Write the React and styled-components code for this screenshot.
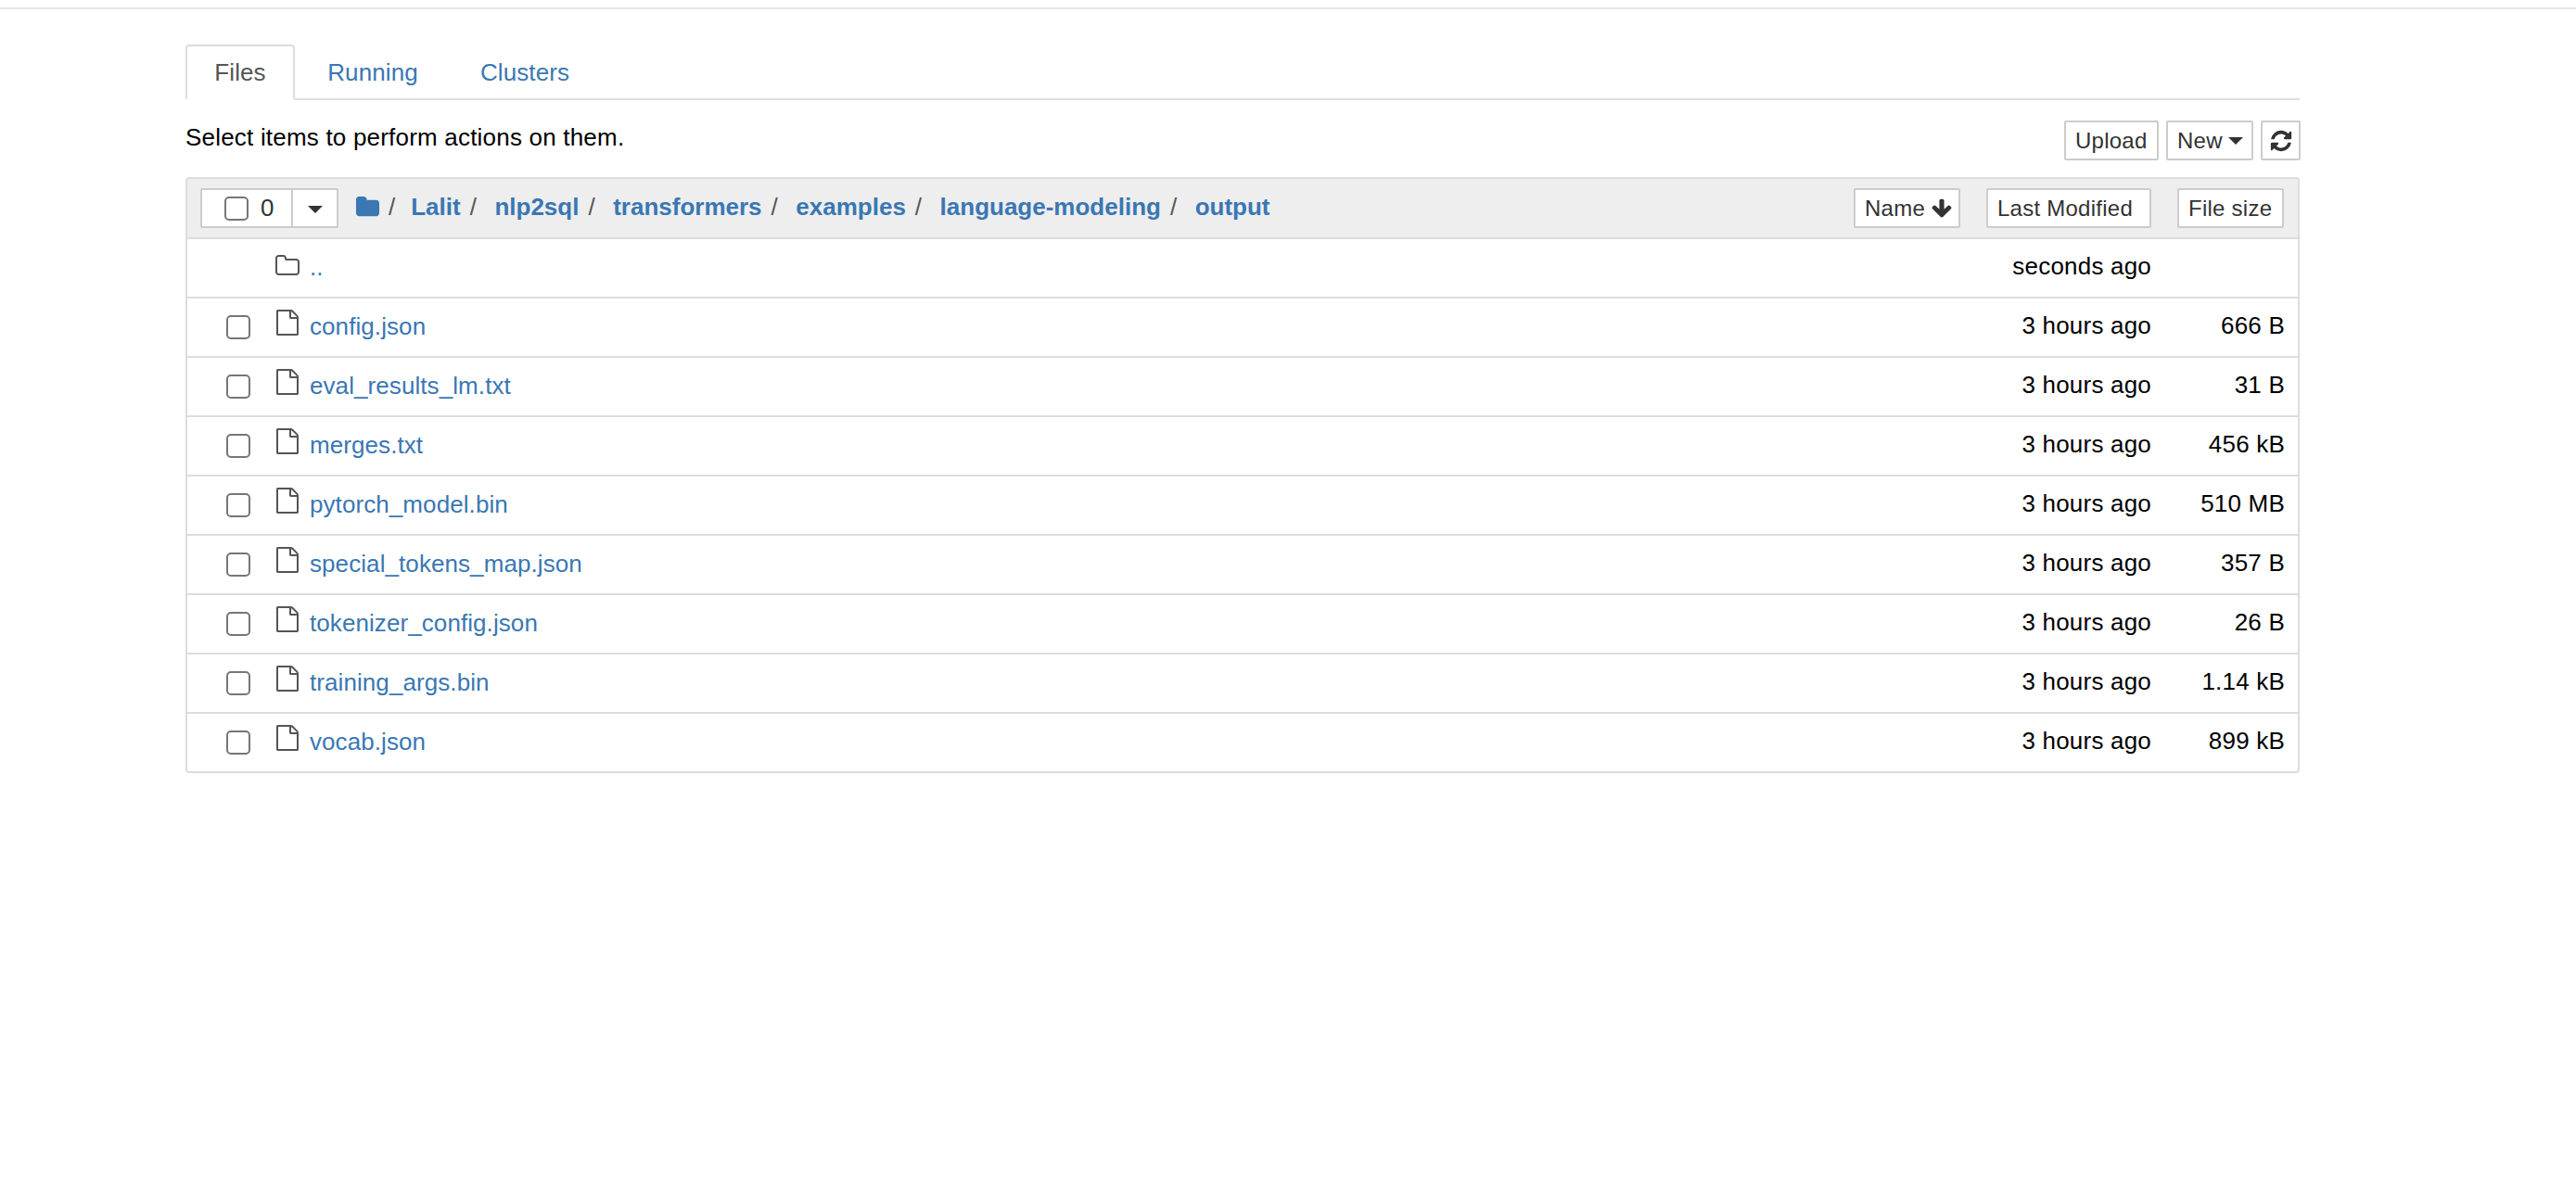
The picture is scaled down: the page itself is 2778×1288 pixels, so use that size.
import React from "react";
import styled, { createGlobalStyle } from "styled-components";

const Global = createGlobalStyle`
  html, body { margin: 0; padding: 0; background: #fff; }
  body { font-family: "Liberation Sans", Arial, sans-serif; font-size: 26px; color: #000; letter-spacing: 0.2px; }
  * { box-sizing: border-box; }
`;

const TopRule = styled.div`
  height: 10px;
  border-bottom: 2px solid #e7e7e7;
`;
const Page = styled.main`
  width: 2281px;
  margin: 38px 0 0 200px;
`;
const Tabs = styled.nav`
  display: flex;
  height: 60px;
  width: 2280px;
  border-bottom: 2px solid #ddd;
`;
const Tab = styled.a`
  display: flex;
  align-items: center;
  justify-content: center;
  height: 60px;
  width: ${p => p.$w}px;
  margin-right: ${p => p.$mr || 0}px;
  color: ${p => (p.$active ? "#555" : "#3a77b3")};
  background: ${p => (p.$active ? "#fff" : "transparent")};
  border: 2px solid ${p => (p.$active ? "#ddd" : "transparent")};
  border-bottom-color: ${p => (p.$active ? "#fff" : "transparent")};
  border-radius: 4px 4px 0 0;
  line-height: 36px;
  letter-spacing: 0.1px;
`;
const ActionRow = styled.div`
  display: flex;
  justify-content: space-between;
  align-items: flex-start;
  height: 83px;
`;
const Hint = styled.p`
  margin: 22px 0 0;
  line-height: 36px;
`;
const Actions = styled.div`
  display: flex;
  gap: 8px;
  margin-top: 22px;
`;
const Button = styled.button`
  display: inline-flex;
  align-items: center;
  justify-content: ${p => (p.$icon ? "center" : "flex-start")};
  gap: ${p => p.$gap || 0}px;
  width: ${p => p.$w}px;
  height: 43px;
  padding: 0 0 0 ${p => (p.$icon ? 0 : 10)}px;
  background: #fff;
  border: 2px solid #ccc;
  border-radius: 2px;
  color: #333;
  font: 24px/34px "Liberation Sans", Arial, sans-serif;
  letter-spacing: 0.25px;
`;
const Panel = styled.section`
  width: 2280px;
  border: 2px solid #ddd;
  border-radius: 4px;
`;
const Header = styled.header`
  display: flex;
  align-items: center;
  height: 65px;
  padding: 0 15px 0 14px;
  background: #eee;
  border-bottom: 2px solid #ddd;
`;
const SelectGroup = styled.div`
  display: flex;
  width: 149px;
  height: 43px;
  background: #fff;
  border: 2px solid #ccc;
  border-radius: 2px;
`;
const SelectCount = styled.div`
  display: flex;
  align-items: center;
  gap: 13px;
  width: 98px;
  padding-left: 24px;
  border-right: 2px solid #ccc;
  color: #333;
`;
const Caret = styled.span`
  display: inline-block;
  width: 0;
  height: 0;
  border-top: ${p => p.$size || 7}px solid #333;
  border-left: ${p => p.$size || 7}px solid transparent;
  border-right: ${p => p.$size || 7}px solid transparent;
`;
const CaretCell = styled.div`
  flex: 1;
  display: flex;
  align-items: center;
  justify-content: center;
  padding-top: 3px;
`;
const Check = styled.input.attrs({ type: "checkbox" })`
  appearance: none;
  display: block;
  flex: none;
  width: 26px;
  height: 26px;
  margin: 0;
  background: #fff;
  border: 2px solid #767676;
  border-radius: 5px;
`;
const Crumbs = styled.div`
  display: flex;
  align-items: center;
  margin-left: 18px;
  margin-top: -3px;
  color: #555;
  font-weight: 700;
  letter-spacing: 0;
`;
const Crumb = styled.a`
  color: #3a77b3;
`;
const Sep = styled.span`
  font-weight: 400;
  margin: 0 ${p => p.$r ?? 19.5}px 0 ${p => p.$l ?? 10}px;
`;
const Sorts = styled.div`
  display: flex;
  align-items: center;
  gap: 28px;
  margin-left: auto;
`;
const Row = styled.div`
  display: grid;
  grid-template-columns: 96px 1fr 1fr 144px;
  align-items: center;
  height: ${p => (p.$last ? 62 : 64)}px;
  padding: 0 14px;
  border-bottom: ${p => (p.$last ? "none" : "2px solid #ddd")};
`;
const Lead = styled.div`
  display: flex;
  align-items: center;
  padding-left: 28px;
`;
const NameCell = styled.div`
  display: flex;
  align-items: center;
  gap: 11px;
  margin-left: -16px;
`;
const Glyph = styled.svg`
  flex: none;
  display: block;
  width: ${p => p.$size}px;
  height: ${p => p.$size}px;
  fill: ${p => p.$color || "#555"};
  margin-top: ${p => p.$mt || 0}px;
`;
const FileLink = styled.a`
  color: #3a77b3;
  margin: -2px 0 0 -1px;
  letter-spacing: 0.08px;
  white-space: nowrap;
`;
const Modified = styled.div`
  text-align: right;
  margin-bottom: 4px;
`;
const Size = styled.div`
  text-align: right;
  margin-bottom: 4px;
`;

const P = {
  file: "M1596 380q28 28 48 76t20 88v1152q0 40-28 68t-68 28h-1344q-40 0-68-28t-28-68v-1600q0-40 28-68t68-28h896q40 0 88 20t76 48zm-444-244v376h376q-10-29-22-41l-313-313q-12-12-41-22zm384 1528v-1024h-416q-40 0-68-28t-28-68v-416h-768v1536h1280z",
  folderO: "M1600 1312v-704q0-40-28-68t-68-28h-704q-40 0-68-28t-28-68v-64q0-40-28-68t-68-28h-320q-40 0-68 28t-28 68v960q0 40 28 68t68 28h1216q40 0 68-28t28-68zm128-704v704q0 92-66 158t-158 66h-1216q-92 0-158-66t-66-158v-960q0-92 66-158t158-66h320q92 0 158 66t66 158v32h672q92 0 158 66t66 158z",
  folder: "M1728 608v704q0 92-66 158t-158 66h-1216q-92 0-158-66t-66-158v-960q0-92 66-158t158-66h320q92 0 158 66t66 158v32h672q92 0 158 66t66 158z",
  down: "M1675 832q0 53-37 90l-651 652q-39 37-91 37-53 0-90-37l-651-652q-38-36-38-90 0-53 38-91l74-75q39-37 91-37 53 0 90 37l294 294v-704q0-52 38-90t90-38h128q52 0 90 38t38 90v704l294-294q37-37 90-37 52 0 91 37l75 75q37 39 37 91z",
  refresh: "M1639 1056q0 5-1 7-64 268-268 434.5t-478 166.5q-146 0-282.5-55t-243.5-157l-129 129q-19 19-45 19t-45-19-19-45v-448q0-26 19-45t45-19h448q26 0 45 19t19 45-19 45l-137 137q71 66 161 102t187 36q134 0 250-65t186-179q11-17 53-117 8-23 30-23h192q13 0 22.5 9.5t9.5 22.5zm25-800v448q0 26-19 45t-45 19h-448q-26 0-45-19t-19-45 19-45l138-138q-148-137-349-137-134 0-250 65t-186 179q-11 17-53 117-8 23-30 23h-199q-13 0-22.5-9.5t-9.5-22.5v-7q65-268 270-434.5t480-166.5q146 0 284 55.5t245 156.5l130-129q19-19 45-19t45 19 19 45z",
};

const Icon = ({ d, size, color, mt }) => (
  <Glyph viewBox="0 0 1792 1792" $size={size} $color={color} $mt={mt}>
    <path d={d} />
  </Glyph>
);

const crumbs = ["Lalit", "nlp2sql", "transformers", "examples", "language-modeling", "output"];
const files = [
  ["config.json", "666 B"],
  ["eval_results_lm.txt", "31 B"],
  ["merges.txt", "456 kB"],
  ["pytorch_model.bin", "510 MB"],
  ["special_tokens_map.json", "357 B"],
  ["tokenizer_config.json", "26 B"],
  ["training_args.bin", "1.14 kB"],
  ["vocab.json", "899 kB"],
];

export default function App() {
  return (
    <>
      <Global />
      <TopRule />
      <Page>
        <Tabs>
          <Tab $active $w={118} $mr={4}>Files</Tab>
          <Tab $w={160} $mr={4}>Running</Tab>
          <Tab $w={160}>Clusters</Tab>
        </Tabs>
        <ActionRow>
          <Hint>Select items to perform actions on them.</Hint>
          <Actions>
            <Button $w={102}>Upload</Button>
            <Button $w={94} $gap={6}>New <Caret $size={8} /></Button>
            <Button $w={43} $icon><Icon d={P.refresh} size={26} color="#333" /></Button>
          </Actions>
        </ActionRow>
        <Panel>
          <Header>
            <SelectGroup>
              <SelectCount><Check />0</SelectCount>
              <CaretCell><Caret $size={8} /></CaretCell>
            </SelectGroup>
            <Crumbs>
              <Icon d={P.folder} size={27} color="#3a77b3" />
              <Sep $l={9} $r={17}>/</Sep>
              {crumbs.map((c, i) => (
                <React.Fragment key={c}>
                  <Crumb>{c}</Crumb>
                  {i < crumbs.length - 1 && <Sep>/</Sep>}
                </React.Fragment>
              ))}
            </Crumbs>
            <Sorts>
              <Button $w={115} $gap={6}>Name <Icon d={P.down} size={24} color="#333" /></Button>
              <Button $w={178}>Last Modified</Button>
              <Button $w={115}>File size</Button>
            </Sorts>
          </Header>
          <Row>
            <Lead />
            <NameCell>
              <Icon d={P.folderO} size={28} mt={-4} />
              <FileLink>..</FileLink>
            </NameCell>
            <Modified>seconds ago</Modified>
            <Size />
          </Row>
          {files.map(([name, size], i) => (
            <Row key={name} $last={i === files.length - 1}>
              <Lead><Check /></Lead>
              <NameCell>
                <Icon d={P.file} size={28} mt={-10} />
                <FileLink>{name}</FileLink>
              </NameCell>
              <Modified>3 hours ago</Modified>
              <Size>{size}</Size>
            </Row>
          ))}
        </Panel>
      </Page>
    </>
  );
}
